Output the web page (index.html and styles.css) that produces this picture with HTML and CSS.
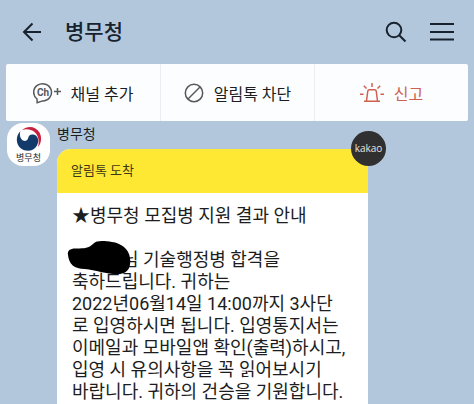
FILE: index.html
```html
<!DOCTYPE html>
<html lang="ko">
<head>
  <meta charset="UTF-8">
  <meta name="viewport" content="width=device-width, initial-scale=1">
  <title>병무청</title>
  <link rel="stylesheet" href="styles.css">
</head>
<body>
  <header class="topbar">
    <button class="icon-btn" type="button" aria-label="뒤로">
      <svg width="20" height="20" viewBox="0 0 20 20"><path d="M19 10H2M10.500 1.500L2 10l8.500 8.500"/></svg>
    </button>
    <h1>병무청</h1>
    <button class="icon-btn" type="button" aria-label="검색">
      <svg width="22" height="22" viewBox="0 0 22 22"><circle cx="9" cy="9" r="7.300"/><path d="M14.200 14.200L20.500 20.500"/></svg>
    </button>
    <button class="icon-btn" type="button" aria-label="메뉴">
      <svg width="24" height="20" viewBox="0 0 24 20"><path d="M0 2h24M0 10h24M0 17.500h24"/></svg>
    </button>
  </header>

  <nav class="actions">
    <button class="action" type="button">
      <svg width="28" height="22" viewBox="0 0 28 22">
        <path d="M4 17A8.900 8.600 0 1 1 9.500 18.900L4.200 20.800z"/>
        <text x="10" y="13.500" text-anchor="middle">Ch</text>
        <path d="M21 9.500h7M24.500 6v7"/>
      </svg>
      채널 추가
    </button>
    <button class="action" type="button">
      <svg width="20" height="20" viewBox="0 0 20 20"><circle cx="10" cy="10" r="8.700"/><path d="M4 16L16 4"/></svg>
      알림톡 차단
    </button>
    <button class="action report" type="button">
      <svg width="24" height="20" viewBox="0 0 24 20">
        <path d="M6.500 18L7.800 8Q8 6.800 9.200 6.800h5.600Q16 6.800 16.200 8L17.500 18M4 18.300h16M12 0v4M3.800 2.800l2.700 2.700M20.200 2.800l-2.700 2.700M0 11.300h3.500M20.500 11.300H24"/>
      </svg>
      신고
    </button>
  </nav>

  <main class="chat">
    <div class="avatar">
      <svg width="26" height="26" viewBox="0 0 26 26">
        <path class="red" d="M6 4C12-1 20 .5 23.500 6.500 26 11 25.500 17 22 21 23.500 15 22.500 9.500 18.500 6 15 3 10.500 2.500 6 4z"/>
        <path class="navy" d="M4.500 5C-.5 10-.5 18 5 22.500c5.500 4 13 2.500 16-3C23.500 14.500 22 9.500 17.500 8.500 14 8 12.500 10 12.200 12 11.500 15 8 16 5.800 13.500 3.500 11 3.500 7.500 4.500 5z"/>
      </svg>
      <span>병무청</span>
    </div>
    <div class="content">
      <p class="sender">병무청</p>
      <article class="bubble">
        <span class="kakao">kakao</span>
        <h2>알림톡 도착</h2>
        <p class="message">
          ★병무청 모집병 지원 결과 안내<br>
          <br>
          <span class="name"><svg width="64" height="36" viewBox="0 0 64 36"><path d="M1 15C0 10 4 8 10 8.500 17 8.500 22 8 26 4 30 0 37 1 45 2 54 3 62 9 63 18 64 26 62 33 53 34 42 35 29 30 18 29 7 29 2 24 1 15z"/></svg></span>님 기술행정병 합격을<br>
          축하드립니다. 귀하는<br>
          2022년06월14일 14:00까지 3사단<br>
          로 입영하시면 됩니다. 입영통지서는<br>
          이메일과 모바일앱 확인(출력)하시고,<br>
          입영 시 유의사항을 꼭 읽어보시기<br>
          바랍니다. 귀하의 건승을 기원합니다.
        </p>
      </article>
    </div>
  </main>
</body>
</html>
```

FILE: styles.css
```css
* {
  box-sizing: border-box;
}
html {
  scrollbar-width: none;
}
body {
  margin: 0;
  background: #b2c7db;
  color: #1c1d20;
  font-family: Roboto, "Noto Sans CJK KR", sans-serif;
}
h1, h2, p {
  margin: 0;
}
button {
  border: 0;
  padding: 0;
  background: none;
  color: inherit;
  font: inherit;
}
svg {
  flex: none;
  fill: none;
  stroke: currentColor;
}

.topbar {
  display: flex;
  align-items: center;
  gap: 23px;
  height: 64px;
  padding: 0 20px 0 22px;
  color: #18222f;
}
.topbar h1 {
  flex: 1;
  font-size: 21px;
  font-weight: 500;
  line-height: 28px;
}
.icon-btn {
  display: flex;
}
.icon-btn svg {
  stroke-width: 2;
}

.actions {
  display: grid;
  grid-template-columns: repeat(3, 1fr);
  margin: 0 6px;
  border-radius: 2px;
  background: #fcfdfe;
}
.action {
  display: flex;
  align-items: center;
  justify-content: center;
  gap: 10px;
  height: 57px;
  font-size: 16px;
}
.action + .action {
  border-left: 1px solid #e9edf1;
}
.action svg {
  color: #55585c;
  stroke-width: 1.5;
}
.action text {
  fill: currentColor;
  stroke: none;
  font-size: 10px;
  font-weight: 700;
}
.action.report,
.action.report svg {
  color: #d0604f;
}

.chat {
  display: flex;
  align-items: flex-start;
  gap: 7px;
  padding: 2px 0 0 7px;
}
.avatar {
  display: flex;
  flex: none;
  flex-direction: column;
  align-items: center;
  width: 43px;
  height: 43px;
  padding-top: 3px;
  border-radius: 16px;
  background: #fff;
  font-size: 9px;
  line-height: 12px;
}
.avatar svg {
  stroke: none;
}
.red {
  fill: #c8203f;
}
.navy {
  fill: #123a6b;
}
.content {
  flex: 1;
  margin-right: 106px;
}
.sender {
  padding-bottom: 4px;
  font-size: 14px;
  line-height: 22px;
}
.bubble {
  position: relative;
  border-radius: 14px 0 14px 14px;
  background: #fff;
}
.bubble h2 {
  padding: 11px 14px;
  border-radius: 14px 0 0 0;
  background: #ffe833;
  color: #3d3918;
  font-size: 13px;
  font-weight: 400;
  line-height: 22px;
}
.kakao {
  position: absolute;
  top: -18px;
  right: -18px;
  width: 35px;
  height: 35px;
  border-radius: 50%;
  background: #303030;
  color: #e6e6e6;
  font-family: "Open Sans", sans-serif;
  font-size: 10px;
  line-height: 35px;
  text-align: center;
}
.message {
  padding: 12px 0 20px 15px;
  font-size: 18px;
  line-height: 22px;
  white-space: nowrap;
}
.name {
  display: inline-block;
  position: relative;
  width: 50px;
}
.name svg {
  position: absolute;
  top: -26px;
  left: -5px;
  fill: #000;
  stroke: none;
}
```
